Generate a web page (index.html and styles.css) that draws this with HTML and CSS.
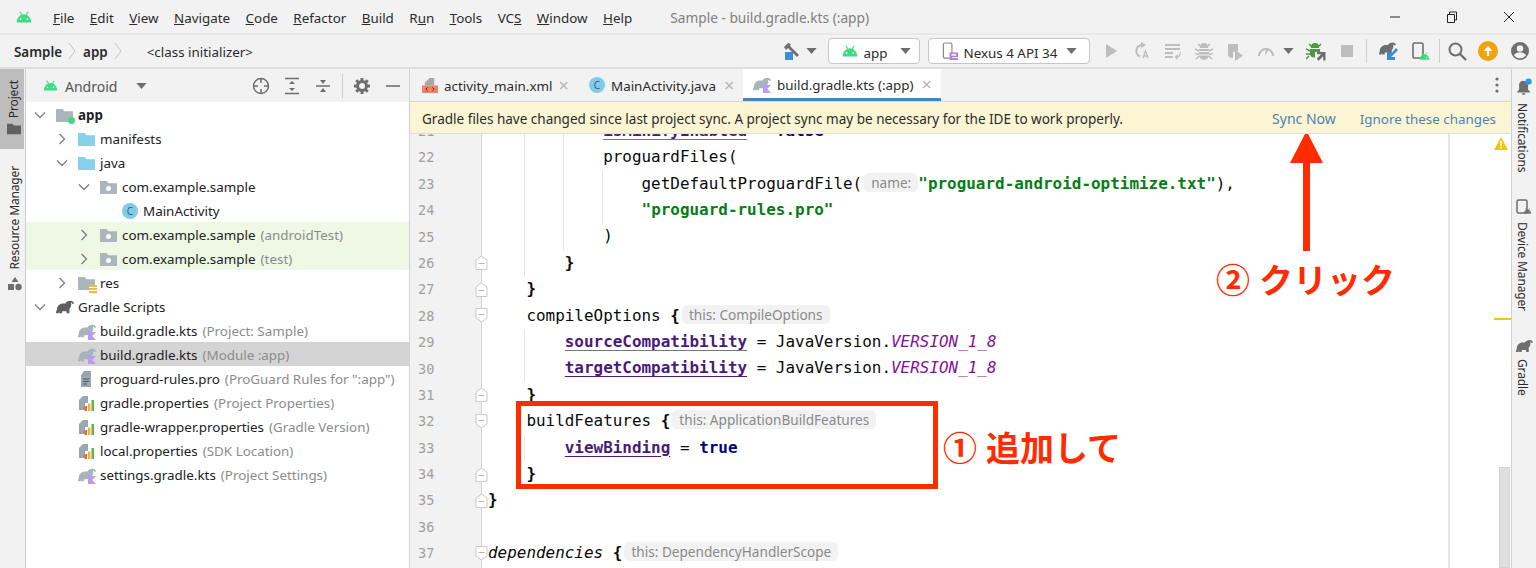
FILE: index.html
```html
<!DOCTYPE html>
<html lang="en">
<head>
<meta charset="utf-8">
<title>Sample - build.gradle.kts (:app)</title>
<link rel="stylesheet" href="styles.css">
</head>
<body>
<svg class="defs" aria-hidden="true">
  <symbol id="android" viewBox="0 0 16 12"><path d="M4 1 L5.6 3.4 M12 1 L10.4 3.4" stroke="currentColor" stroke-width="1.1" stroke-linecap="round" fill="none"/><path fill="currentColor" fill-rule="evenodd" d="M.6 11.5C.9 6.8 4 3.2 8 3.2s7.1 3.6 7.4 8.3zM4.6 7.1a.9.9 0 1 0 0 1.8.9.9 0 0 0 0-1.8zm6.8 0a.9.9 0 1 0 0 1.8.9.9 0 0 0 0-1.8z"/></symbol>
  <symbol id="folder" viewBox="0 0 17 13"><path fill="currentColor" d="M0 0h6.5l2 2.2H17V13H0z"/></symbol>
  <symbol id="elephant" viewBox="0 0 20 14"><path fill="currentColor" d="M0 14C0 12 .5 11 1 10 1 6 4 3 8 3h2.500C11.500 1.200 13.500 0 16 0c2.200 0 3.500 1.200 4 3l-1.700.6c-.4-1-1.100-1.400-1.700-1.300.8 2.200.2 5.200-1.600 6.500V14h-3.200v-2.200h-5V14H3.600v-2L2.800 14z"/></symbol>
  <symbol id="kotlin" viewBox="0 0 8 8"><path fill="#b79cf7" d="M0 0h8L4.200 4 8 8H0z"/></symbol>
  <symbol id="caret" viewBox="0 0 12 7"><path fill="currentColor" d="M0 0h12L6 7z"/></symbol>
  <symbol id="chev-r" viewBox="0 0 14 14"><path fill="none" stroke="#7d7d7d" stroke-width="1.300" d="M4.500 2l5 5-5 5"/></symbol>
  <symbol id="chev-d" viewBox="0 0 14 14"><path fill="none" stroke="#7d7d7d" stroke-width="1.300" d="M2 4.500l5 5 5-5"/></symbol>
  <symbol id="props" viewBox="0 0 16 16"><path fill="#9aa7b0" d="M1 5l4-4h5v7H7v7H1z"/><path fill="#f26522" d="M6.500 11h2.500v5H6.500z"/><path fill="#f4af3d" d="M10 8.500h2.500V16H10z"/><path fill="#62b543" d="M13.500 5H16v11h-2.500z"/></symbol>
  <symbol id="fold-end" viewBox="0 0 13 15"><path fill="#fff" stroke="#c9c9c9" d="M1 14.500V5l5.500-4L12 5v9.500z"/><path stroke="#b5b5b5" d="M3.500 8.500h6"/></symbol>
  <symbol id="fold-start" viewBox="0 0 13 15"><path fill="#fff" stroke="#c9c9c9" d="M1 .5V10l5.500 4L12 10V.5z"/><path stroke="#b5b5b5" d="M3.500 6.500h6"/></symbol>
</svg>

<div class="app">
  <header class="titlebar">
    <svg class="ic-logo"><use href="#android"/></svg>
    <nav class="menu">
      <span><u>F</u>ile</span><span><u>E</u>dit</span><span><u>V</u>iew</span><span><u>N</u>avigate</span><span><u>C</u>ode</span><span><u>R</u>efactor</span><span><u>B</u>uild</span><span>R<u>u</u>n</span><span><u>T</u>ools</span><span>VC<u>S</u></span><span><u>W</u>indow</span><span><u>H</u>elp</span>
    </nav>
    <div class="wintitle">Sample - build.gradle.kts (:app)</div>
    <div class="winctl">
      <svg viewBox="0 0 12 12"><path d="M1 6h10" stroke="#222" fill="none"/></svg>
      <svg viewBox="0 0 12 12"><path d="M1.500 3.500h7v8h-7zM3.500 3.500v-2.500h7v8h-2" stroke="#222" fill="none"/></svg>
      <svg viewBox="0 0 12 12"><path d="M1 1l10 10M11 1L1 11" stroke="#222" fill="none"/></svg>
    </div>
  </header>

  <div class="navbar">
    <div class="crumbs">
      <span class="crumb">Sample</span>
      <svg class="crumb-sep" viewBox="0 0 8 18"><path d="M1 1l6 8-6 8" fill="none" stroke="#c4c4c4"/></svg>
      <span class="crumb">app</span>
      <svg class="crumb-sep" viewBox="0 0 8 18"><path d="M1 1l6 8-6 8" fill="none" stroke="#c4c4c4"/></svg>
      <span class="crumb-cls">&lt;class initializer&gt;</span>
    </div>
    <div class="toolbar">
      <svg class="tb hammer" viewBox="0 0 20 20"><path fill="#6e6e6e" d="M3 6l4-4 3 1-1 2 9 9-2 2-9-9-2 2z"/><rect fill="#3b8fd6" x="4" y="11" width="8" height="8"/></svg>
      <svg class="tb-caret"><use href="#caret"/></svg>
      <div class="combo combo-app">
        <svg class="combo-android"><use href="#android"/></svg><span>app</span>
        <svg class="tb-caret"><use href="#caret"/></svg>
      </div>
      <div class="combo combo-dev">
        <svg class="combo-phone" viewBox="0 0 18 20"><rect x="1.500" y="1" width="9" height="16" rx="1.500" fill="none" stroke="#8a8a8a" stroke-width="1.300"/><rect x="8" y="11" width="9" height="5" fill="#b27ed0"/><rect x="8" y="17" width="9" height="2" fill="#b27ed0"/><rect x="10" y="12.500" width="5" height="2" fill="#f2f2f2"/></svg>
        <span>Nexus 4 API 34</span>
        <svg class="tb-caret"><use href="#caret"/></svg>
      </div>
      <svg class="tb run" viewBox="0 0 20 20"><path fill="#bdbdbd" d="M5 3l11 7-11 7z"/></svg>
      <svg class="tb" viewBox="0 0 20 20"><path fill="none" stroke="#bdbdbd" stroke-width="2" d="M10 4a6 6 0 0 0-2 11.500"/><path fill="#bdbdbd" d="M9 1l5 3-5 3z"/><path fill="none" stroke="#bdbdbd" stroke-width="1.300" d="M11 17l2.500-7 2.500 7M12 15h3"/></svg>
      <svg class="tb" viewBox="0 0 20 20"><path fill="none" stroke="#bdbdbd" stroke-width="2" d="M2 4h15M2 8h15M2 12h8M2 16h8"/><path fill="none" stroke="#bdbdbd" stroke-width="1.300" d="M17 11c1 3-1 5-4 5m1.500-2l-2 2 2 2"/></svg>
      <svg class="tb" viewBox="0 0 20 20"><path fill="#bdbdbd" d="M6 6a4 4 0 0 1 8 0v1H6zM5 8h10v6a5 5 0 0 1-10 0z"/><path fill="none" stroke="#bdbdbd" stroke-width="1.500" d="M1 8l4 2M19 8l-4 2M1 13h4M19 13h-4M2 18l3-3M18 18l-3-3M4 3l3 3M16 3l-3 3"/><path stroke="#f2f2f2" d="M5 10.500h10M5 14h10"/></svg>
      <svg class="tb" viewBox="0 0 20 20"><path fill="#bdbdbd" d="M3 3h10v7l-5 1v6H7a4 4 0 0 1-4-4z"/><path fill="#bdbdbd" d="M10 9l8 5.500-8 5.500z"/></svg>
      <svg class="tb" viewBox="0 0 20 20"><path fill="none" stroke="#bdbdbd" stroke-width="2" d="M3 15a7 7 0 0 1 14 0"/><path fill="#bdbdbd" d="M9 15l1-8 3 1z"/></svg>
      <svg class="tb-caret prof-caret"><use href="#caret"/></svg>
      <svg class="tb attach" viewBox="0 0 20 20"><path fill="#4c9a3f" d="M5 6a4 4 0 0 1 8 0v1H5zM4 8h10v3H9v5.500A5 5 0 0 1 4 14z"/><path fill="none" stroke="#4c9a3f" stroke-width="1.500" d="M0 8l4 2M0 13h4M0 18l3-3M3 3l3 3M15 3l-3 3"/><path fill="#6e6e6e" d="M19.500 11v8.500h-2.300v-4.200l-4.500 4.500-2-2 4.500-4.500h-4.200V11z"/></svg>
      <svg class="tb" viewBox="0 0 20 20"><rect fill="#bdbdbd" x="4" y="4" width="12" height="12"/></svg>
      <i class="tb-sep sep-a"></i>
      <svg class="tb sync" viewBox="0 0 20 20"><use href="#elephant" width="17" height="13" y="1" color="#6e6e6e"/><path fill="#2f8edb" d="M19 9l-7 7h4v3H8v-8h3v3l6-7z"/></svg>
      <svg class="tb" viewBox="0 0 20 20"><rect x="3" y="2" width="10" height="15" rx="1.500" fill="none" stroke="#6e6e6e" stroke-width="1.600"/><g color="#3ddc84"><use href="#android" x="9" y="11" width="11" height="8"/></g></svg>
      <i class="tb-sep sep-b"></i>
      <svg class="tb search" viewBox="0 0 20 20"><circle cx="8.500" cy="8.500" r="6" fill="none" stroke="#6e6e6e" stroke-width="2"/><path stroke="#6e6e6e" stroke-width="2.400" d="M13 13l6 6"/></svg>
      <svg class="tb update" viewBox="0 0 20 20"><circle cx="10" cy="10" r="10" fill="#f0a30a"/><path fill="#fff" d="M10 5l4.500 5H11.200v5H8.800v-5H5.500z"/></svg>
      <svg class="tb avatar" viewBox="0 0 20 20"><circle cx="10" cy="10" r="9" fill="#6e6e6e"/><circle cx="10" cy="7.500" r="3.200" fill="#f2f2f2"/><path fill="#f2f2f2" d="M4 14.500c1-2.500 3.500-3 6-3s5 .5 6 3a8 8 0 0 1-12 0z"/></svg>
    </div>
  </div>

  <main class="main">
    <aside class="strip strip-left">
      <div class="toolbtn active">
        <span class="vtext flip">Project</span>
        <svg class="strip-folder"><use href="#folder"/></svg>
      </div>
      <div class="toolbtn res">
        <span class="vtext flip">Resource Manager</span>
        <svg class="strip-res" viewBox="0 0 14 14"><path fill="#6e6e6e" d="M7 0l3.500 5h-7zM0 7h6v6H0z"/><circle cx="10.500" cy="10" r="3.200" fill="#6e6e6e"/></svg>
      </div>
    </aside>

    <section class="project">
      <div class="proj-head">
        <svg class="ph-android"><use href="#android"/></svg>
        <span class="ph-title">Android</span>
        <svg class="ph-caret"><use href="#caret"/></svg>
        <div class="ph-tools">
          <svg viewBox="0 0 18 18"><circle cx="9" cy="9" r="7.500" fill="none" stroke="#6e6e6e" stroke-width="1.500"/><path stroke="#6e6e6e" stroke-width="1.500" d="M9 1v5M9 12v5M1 9h5M12 9h5"/></svg>
          <svg viewBox="0 0 18 18"><path stroke="#6e6e6e" stroke-width="1.500" d="M2 1.500h14M2 16.500h14"/><path fill="#6e6e6e" d="M9 4l3 3H6zM9 14l-3-3h6z"/></svg>
          <svg viewBox="0 0 18 18"><path stroke="#6e6e6e" stroke-width="1.500" d="M2 9h14"/><path fill="#6e6e6e" d="M9 7L6 3h6zM9 11l3 4H6z"/></svg>
          <i class="ph-sep"></i>
          <svg viewBox="0 0 18 18"><circle cx="9" cy="9" r="4.500" fill="none" stroke="#6e6e6e" stroke-width="3"/><path stroke="#6e6e6e" stroke-width="3" d="M9 1v3M9 14v3M1 9h3M14 9h3M3.300 3.300l2 2M12.700 12.700l2 2M3.300 14.700l2-2M12.700 5.300l2-2"/></svg>
          <svg viewBox="0 0 18 18"><path stroke="#6e6e6e" stroke-width="1.600" d="M2 9h14"/></svg>
        </div>
      </div>
      <div class="tree">
        <div class="row l0"><svg class="chev"><use href="#chev-d"/></svg><span class="ti folder-ic gray"><svg><use href="#folder"/></svg><i class="dot-green"></i></span><b class="name">app</b></div>
        <div class="row l1"><svg class="chev"><use href="#chev-r"/></svg><span class="ti folder-ic blue"><svg><use href="#folder"/></svg></span><span class="name">manifests</span></div>
        <div class="row l1"><svg class="chev"><use href="#chev-d"/></svg><span class="ti folder-ic blue"><svg><use href="#folder"/></svg></span><span class="name">java</span></div>
        <div class="row l2"><svg class="chev"><use href="#chev-d"/></svg><span class="ti folder-ic gray"><svg><use href="#folder"/></svg><i class="dot-white"></i></span><span class="name">com.example.sample</span></div>
        <div class="row l3"><span class="class-ic">C</span><span class="name">MainActivity</span></div>
        <div class="row l2 green"><svg class="chev"><use href="#chev-r"/></svg><span class="ti folder-ic gray"><svg><use href="#folder"/></svg><i class="dot-white"></i></span><span class="name">com.example.sample</span><span class="hint">(androidTest)</span></div>
        <div class="row l2 green"><svg class="chev"><use href="#chev-r"/></svg><span class="ti folder-ic gray"><svg><use href="#folder"/></svg><i class="dot-white"></i></span><span class="name">com.example.sample</span><span class="hint">(test)</span></div>
        <div class="row l1"><svg class="chev"><use href="#chev-r"/></svg><span class="ti folder-ic gray"><svg><use href="#folder"/></svg><i class="res-lines"></i></span><span class="name">res</span></div>
        <div class="row l0"><svg class="chev"><use href="#chev-d"/></svg><span class="ti elephant dark"><svg><use href="#elephant"/></svg></span><span class="name">Gradle Scripts</span></div>
        <div class="row l1f"><span class="ti elephant light"><svg><use href="#elephant"/></svg><svg class="ko"><use href="#kotlin"/></svg></span><span class="name">build.gradle.kts</span><span class="hint">(Project: Sample)</span></div>
        <div class="row l1f selected"><span class="ti elephant light"><svg><use href="#elephant"/></svg><svg class="ko"><use href="#kotlin"/></svg></span><span class="name">build.gradle.kts</span><span class="hint">(Module :app)</span></div>
        <div class="row l1f"><span class="ti doc"><svg viewBox="0 0 16 16"><path fill="#9aa7b0" d="M3 4l3-4h7v16H3z"/><path stroke="#555" d="M5 8h6M5 10.500h6M5 13h4"/></svg></span><span class="name">proguard-rules.pro</span><span class="hint">(ProGuard Rules for ":app")</span></div>
        <div class="row l1f"><span class="ti doc"><svg><use href="#props"/></svg></span><span class="name">gradle.properties</span><span class="hint">(Project Properties)</span></div>
        <div class="row l1f"><span class="ti doc"><svg><use href="#props"/></svg></span><span class="name">gradle-wrapper.properties</span><span class="hint">(Gradle Version)</span></div>
        <div class="row l1f"><span class="ti doc"><svg><use href="#props"/></svg></span><span class="name">local.properties</span><span class="hint">(SDK Location)</span></div>
        <div class="row l1f"><span class="ti elephant light"><svg><use href="#elephant"/></svg><svg class="ko"><use href="#kotlin"/></svg></span><span class="name">settings.gradle.kts</span><span class="hint">(Project Settings)</span></div>
      </div>
    </section>

    <section class="editor">
      <div class="tabs">
        <div class="tab t1">
          <svg class="tab-ic" viewBox="0 0 17 17"><path fill="#a8a8a8" d="M3 6l5-5h5v8H3z"/><rect y="9" width="17" height="8" fill="#ee8560"/><path fill="none" stroke="#4a2a1a" d="M6 11l-2 2 2 2M11 11l2 2-2 2"/></svg>
          <span class="tab-label">activity_main.xml</span><span class="x">×</span>
        </div>
        <div class="tab t2"><span class="class-ic">C</span><span class="tab-label">MainActivity.java</span><span class="x">×</span></div>
        <div class="tab t3 on">
          <span class="ti elephant light"><svg><use href="#elephant"/></svg><svg class="ko"><use href="#kotlin"/></svg></span>
          <span class="tab-label">build.gradle.kts (:app)</span><span class="x">×</span>
        </div>
        <svg class="kebab" viewBox="0 0 4 16"><circle cx="2" cy="2" r="1.600"/><circle cx="2" cy="8" r="1.600"/><circle cx="2" cy="14" r="1.600"/></svg>
      </div>
      <div class="banner">
        <span class="banner-msg">Gradle files have changed since last project sync. A project sync may be necessary for the IDE to work properly.</span>
        <a class="link sync-now">Sync Now</a>
        <a class="link">Ignore these changes</a>
      </div>
      <div class="body">
        <div class="gutter">
          <div class="gl"><span>21</span></div>
          <div class="gl"><span>22</span></div>
          <div class="gl"><span>23</span></div>
          <div class="gl"><span>24</span></div>
          <div class="gl"><span>25</span></div>
          <div class="gl"><span>26</span><svg class="fold"><use href="#fold-end"/></svg></div>
          <div class="gl"><span>27</span><svg class="fold"><use href="#fold-end"/></svg></div>
          <div class="gl"><span>28</span><svg class="fold"><use href="#fold-start"/></svg></div>
          <div class="gl"><span>29</span></div>
          <div class="gl"><span>30</span></div>
          <div class="gl"><span>31</span><svg class="fold"><use href="#fold-end"/></svg></div>
          <div class="gl"><span>32</span><svg class="fold"><use href="#fold-start"/></svg></div>
          <div class="gl"><span>33</span></div>
          <div class="gl"><span>34</span><svg class="fold"><use href="#fold-end"/></svg></div>
          <div class="gl"><span>35</span><svg class="fold"><use href="#fold-end"/></svg></div>
          <div class="gl"><span>36</span></div>
          <div class="gl"><span>37</span><svg class="fold"><use href="#fold-start"/></svg></div>
        </div>
        <div class="code">
          <i class="guide g-a"></i><i class="guide g-b"></i><i class="guide g-c"></i><i class="guide g-d"></i><i class="guide g-e"></i>
          <pre class="cl">            <span class="prop prop-g">isMinifyEnabled</span> = <span class="kw">false</span></pre>
          <pre class="cl">            proguardFiles(</pre>
          <pre class="cl">                getDefaultProguardFile(<span class="inlay">name:</span><span class="str">"proguard-android-optimize.txt"</span>),</pre>
          <pre class="cl">                <span class="str">"proguard-rules.pro"</span></pre>
          <pre class="cl">            )</pre>
          <pre class="cl">        <b>}</b></pre>
          <pre class="cl">    <b>}</b></pre>
          <pre class="cl">    compileOptions <b>{</b><span class="inlay">this: CompileOptions</span></pre>
          <pre class="cl">        <span class="prop prop-g">sourceCompatibility</span> = JavaVersion.<i class="const">VERSION_1_8</i></pre>
          <pre class="cl">        <span class="prop">targetCompatibility</span> = JavaVersion.<i class="const">VERSION_1_8</i></pre>
          <pre class="cl">    <b>}</b></pre>
          <pre class="cl">    buildFeatures <b>{</b><span class="inlay">this: ApplicationBuildFeatures</span></pre>
          <pre class="cl">        <span class="prop">viewBinding</span> = <span class="kw">true</span></pre>
          <pre class="cl">    <b>}</b></pre>
          <pre class="cl"><b>}</b></pre>
          <pre class="cl"> </pre>
          <pre class="cl"><i>dependencies</i> <b>{</b><span class="inlay">this: DependencyHandlerScope</span></pre>
        </div>
        <div class="margin-line"></div>
        <div class="stripe">
          <svg class="warn" viewBox="0 0 14 13"><path fill="#f2c40f" d="M7 0l7 13H0z"/><path stroke="#fff" stroke-width="1.600" d="M7 4v5M7 10v1.600"/></svg>
          <i class="mark"></i>
          <i class="thumb"></i>
        </div>
      </div>
    </section>

    <aside class="strip strip-right">
      <div class="rbtn notif">
        <svg class="bell" viewBox="0 0 18 20"><path fill="#6e6e6e" d="M7 3a6 6 0 0 1 6 6v4l2 2v1H1v-1l2-2V8a5 5 0 0 1 4-5z"/><path fill="#6e6e6e" d="M6 17h4a2 2 0 0 1-4 0z"/><circle cx="13.500" cy="4" r="3.500" fill="#2f9be8"/></svg>
        <span class="vtext">Notifications</span>
      </div>
      <div class="rbtn dev">
        <svg class="rdev" viewBox="0 0 16 16"><rect x="1" y="1" width="10" height="13" rx="1.500" fill="none" stroke="#6e6e6e" stroke-width="1.500"/><use href="#android" x="7" y="9" width="9" height="6" color="#6e6e6e"/></svg>
        <span class="vtext">Device Manager</span>
      </div>
      <div class="rbtn grad">
        <svg class="rgrad"><use href="#elephant"/></svg>
        <span class="vtext">Gradle</span>
      </div>
    </aside>
  </main>

  <div class="ann-box"></div>
  <div class="ann-text ann-1"><span class="circ">①</span><span>追加して</span></div>
  <svg class="ann-arrow" viewBox="0 0 33 120"><path fill="#ff2c00" d="M16.500 0L33 32H20v88h-7V32H0z"/></svg>
  <div class="ann-text ann-2"><span class="circ">②</span><span>クリック</span></div>
</div>
</body>
</html>
```

FILE: styles.css
```css
* { box-sizing: border-box; }
html, body { margin: 0; padding: 0; }
body {
  width: 1536px; height: 568px; overflow: hidden; background: #f2f2f2;
  font-family: "Noto Sans", "Open Sans", sans-serif; font-size: 13.4px; color: #2b2b2b;
}
.defs { position: absolute; width: 0; height: 0; }
.app { position: relative; display: flex; flex-direction: column; width: 1536px; height: 568px; }

/* title bar */
.titlebar { display: flex; align-items: center; height: 35px; flex: none; border-bottom: 2px solid #e9e9e9; }
.ic-logo { width: 16px; height: 12px; margin-left: 16px; color: #3ddc84; flex: none; }
.menu { display: flex; gap: 15.450px; margin-left: 21px; padding-top: 2px; }
.wintitle { margin-left: 38px; padding-top: 2px; color: #808080; font-size: 13.700px; }
.winctl { margin-left: auto; display: flex; gap: 45px; padding-right: 21px; }
.winctl svg { width: 12px; height: 12px; }

/* nav bar */
.navbar { display: flex; align-items: center; height: 34px; flex: none; border-bottom: 2px solid #dedede; }
.crumbs { display: flex; align-items: center; padding-left: 14px; }
.crumb { font-weight: 600; padding-top: 2px; }
.crumb-sep { width: 8px; height: 18px; margin: 0 7px 0 6px; }
.crumb-cls { margin-left: 18px; padding-top: 2px; }
.toolbar { display: flex; align-items: center; margin-left: auto; }
.tb { width: 20px; height: 20px; margin: 0 5.500px; flex: none; }
.tb-caret { width: 11px; height: 6px; color: #6e6e6e; flex: none; }
.hammer { margin: 0 5px 0 0; }
.combo { display: flex; align-items: center; height: 26px; background: #fff; border: 1px solid #c6c6c6; border-radius: 4px; }
.combo span { padding-top: 3px; }
.combo-app { width: 92px; margin-left: 11px; padding-left: 13px; }
.combo-android { width: 16px; height: 12px; color: #3ddc84; margin-right: 6px; }
.combo-app .tb-caret { margin-left: 13px; }
.combo-dev { width: 162px; margin-left: 8px; padding-left: 13px; }
.combo-phone { width: 17px; height: 19px; margin-right: 5px; }
.combo-dev .tb-caret { margin-left: 9px; }
.run { margin-left: 11px; }
.prof-caret { margin-left: 2px; }
.attach { margin-left: 12px; }
.tb-sep { width: 1px; height: 24px; background: #cfcfcf; flex: none; }
.sep-a { margin: 0 4px 0 3px; }
.sync { margin-left: 8px; }
.sep-b { margin: 0 3px 0 4px; }
.search { margin-left: 4px; }
.update { margin-left: 5px; }
.avatar { margin-left: 7px; margin-right: 6px; }

/* main */
.main { display: flex; flex: 1; min-height: 0; }
.strip { flex: none; background: #f2f2f2; }
.strip-left { width: 26px; border-right: 1px solid #d0d0d0; display: flex; flex-direction: column; }
.vtext { writing-mode: vertical-rl; font-size: 12px; letter-spacing: -.15px; white-space: nowrap; line-height: 1; }
.flip { transform: rotate(180deg); }
.toolbtn { display: flex; flex-direction: column; align-items: center; padding-left: 4px; }
.toolbtn.active { height: 80px; background: #bdbdbd; padding-top: 11px; margin-right: 1px; }
.strip-folder { width: 14px; height: 12px; margin-top: 5px; color: #616161; }
.res { margin-top: 17px; }
.strip-res { width: 14px; height: 14px; margin-top: 7px; }

/* project */
.project { width: 384px; flex: none; background: #fff; border-right: 1px solid #d2d2d2; display: flex; flex-direction: column; }
.proj-head { display: flex; align-items: center; height: 33px; background: #f2f2f2; flex: none; }
.ph-android { width: 15px; height: 11px; margin-left: 17px; color: #3ddc84; }
.ph-title { margin-left: 7px; padding-top: 2px; font-size: 14px; color: #555; }
.ph-caret { width: 11px; height: 6px; margin-left: 19px; color: #6e6e6e; }
.ph-tools { display: flex; align-items: center; margin-left: auto; padding-right: 1px; }
.ph-tools svg { width: 18px; height: 18px; margin: 0 6.500px; }
.ph-sep { width: 1px; height: 24px; background: #cfcfcf; margin: 0 3px 0 4px; }
.tree { display: flex; flex-direction: column; }
.row { display: flex; align-items: center; height: 24px; padding-top: 2px; white-space: nowrap; font-size: 13.4px; }
.l0 { padding-left: 7px; }
.l1 { padding-left: 29px; }
.l1f { padding-left: 52px; }
.l2 { padding-left: 51px; }
.l3 { padding-left: 93px; }
.chev { width: 14px; height: 14px; margin-right: 9px; flex: none; }
.ti { position: relative; display: block; width: 17px; height: 13px; margin-right: 5px; flex: none; }
.ti > svg { display: block; width: 100%; height: 100%; }
.gray { color: #aab5bc; }
.blue { color: #89d0ec; }
.dot-green { position: absolute; right: -2px; bottom: -2px; width: 7px; height: 7px; border-radius: 50%; background: #3ddc84; }
.dot-white { position: absolute; left: 6px; top: 5px; width: 5px; height: 5px; border-radius: 50%; background: #fff; }
.res-lines { position: absolute; right: -2px; bottom: -3px; width: 8px; height: 8px; background: repeating-linear-gradient(#f2b84b 0 1.500px, #fff 1.500px 3px); }
.elephant { width: 18px; height: 14px; margin-right: 4px; }
.elephant.dark { color: #5f5f5f; }
.elephant.light { color: #a8b4bc; }
.ti > svg.ko { position: absolute; right: 0; bottom: -2px; width: 8px; height: 8px; }
.doc { width: 16px; height: 16px; margin-right: 6px; }
.name { color: #222; }
.hint { color: #8c8c8c; margin-left: 5px; }
.green { background: #edf8e5; }
.selected { background: #d4d4d4; }
.class-ic { display: flex; align-items: center; justify-content: center; width: 16px; height: 16px; margin-right: 6px; border-radius: 50%; background: #7fcbe8; color: #3f6274; font-size: 10px; flex: none; }
.row .class-ic { margin-left: 3px; margin-right: 5px; }

/* editor */
.editor { flex: 1; min-width: 0; display: flex; flex-direction: column; background: #fff; }
.tabs { display: flex; align-items: center; height: 33px; flex: none; background: #f2f2f2; border-bottom: 1px solid #d8d8d8; }
.tab { display: flex; align-items: center; height: 32px; white-space: nowrap; color: #2b2b2b; }
.tab-label { padding-top: 2px; }
.tab-ic { width: 16px; height: 16px; margin-right: 6px; }
.x { color: #b5b5b5; font-size: 18px; line-height: 1; }
.t1 { width: 167px; padding-left: 12px; }
.t1 .x { margin-left: 6px; }
.t2 { width: 166px; padding-left: 12px; }
.t2 .x { margin-left: 8px; }
.t3 { width: 198px; padding-left: 10px; background: #fff; border-bottom: 3px solid #4083c9; }
.t3 .x { margin-left: 8px; }
.t3 .ti { margin-right: 6px; }
.kebab { width: 4px; height: 16px; margin-left: auto; margin-right: 12px; fill: #6e6e6e; }
.banner { display: flex; align-items: center; height: 32px; flex: none; padding: 2px 15px 0 12px; background: #fcf5d3; border-bottom: 1px solid #e0e0e0; position: relative; z-index: 2; }
.banner-msg { color: #2b2b2b; font-size: 13.530px; }
.link { color: #4b83b4; }
.sync-now { margin-left: auto; font-size: 14px; }
.link + .link { margin-left: 24px; }

.body { position: relative; display: flex; flex: 1; min-height: 0; overflow: hidden; }
.gutter { width: 72px; flex: none; background: #f2f2f2; border-right: 1px solid #d6d6d6; margin-top: -16.200px; height: 480px; color: #a0a0a0; font-family: "DejaVu Sans Mono", monospace; font-size: 13.500px; }
.gl { display: flex; align-items: center; justify-content: space-between; height: 26.400px; padding-left: 8px; }
.fold { width: 13px; height: 15px; margin-right: -7px; position: relative; z-index: 1; }
.code { position: relative; flex: none; width: 960px; margin-top: -16.200px; padding-left: 6px; height: 480px; }
.cl { margin: 0; height: 26.400px; line-height: 26.400px; font-family: "DejaVu Sans Mono", monospace; font-size: 15.940px; color: #0a0a0a; white-space: pre; }
.prop { color: #4a1a78; font-weight: 700; text-decoration: underline; text-underline-offset: 3px; }
.prop-g { text-decoration-color: #777; }
.kw { color: #000080; font-weight: 700; }
.str { color: #067d17; font-weight: 700; }
.const { color: #871094; }
.inlay { display: inline-block; height: 19px; line-height: 19px; padding: 0 7px; margin: 0 0 0 2px; background: #f2f2f2; border-radius: 5px; color: #8a8a8a; font-family: "Noto Sans", sans-serif; font-size: 13.600px; vertical-align: 1px; }
.guide { position: absolute; width: 1px; background: #e3e3e3; }
.g-a { left: 42px; top: 0; height: 158.400px; }
.g-b { left: 81px; top: 0; height: 132px; }
.g-c { left: 120px; top: 52.800px; height: 52.800px; }
.g-d { left: 42px; top: 211.200px; height: 52.800px; }
.g-e { left: 42px; top: 316.800px; height: 26.400px; }
.margin-line { position: absolute; left: 1038px; top: 0; bottom: 0; width: 2px; background: #e4e4e4; }
.stripe { position: relative; flex: 1; }
.warn { position: absolute; right: 3px; top: 3px; width: 14px; height: 13px; }
.mark { position: absolute; right: 0; top: 184px; width: 17px; height: 2px; background: #f2c40f; }
.thumb { position: absolute; right: 1px; top: 333px; bottom: 0; width: 11px; background: #dfdfdf; border: 1px solid #d4d4d4; }

.strip-right { width: 25px; border-left: 1px solid #d0d0d0; display: flex; flex-direction: column; align-items: center; }
.rbtn { display: flex; flex-direction: column; align-items: center; }
.rbtn .vtext { margin-right: 4px; }
.notif { margin-top: 9px; }
.bell { width: 17px; height: 18px; margin-bottom: 7px; }
.dev { margin-top: 27px; }
.rdev { width: 16px; height: 16px; margin-bottom: 7px; }
.grad { margin-top: 29px; }
.rgrad { width: 17px; height: 12px; margin-bottom: 7px; color: #6e6e6e; }

/* annotations */
.ann-box { position: absolute; left: 516px; top: 401px; width: 422px; height: 88px; border: 5px solid #ff2c00; }
.ann-text { position: absolute; display: flex; align-items: center; gap: 9px; color: #ff2c00; font-family: "Noto Sans CJK JP", sans-serif; font-weight: 700; font-size: 34px; line-height: 44px; white-space: nowrap; }
.ann-1 { left: 943px; top: 425px; }
.ann-2 { left: 1216px; top: 257px; }
.ann-arrow { position: absolute; left: 1290px; top: 131px; width: 33px; height: 120px; }
```
